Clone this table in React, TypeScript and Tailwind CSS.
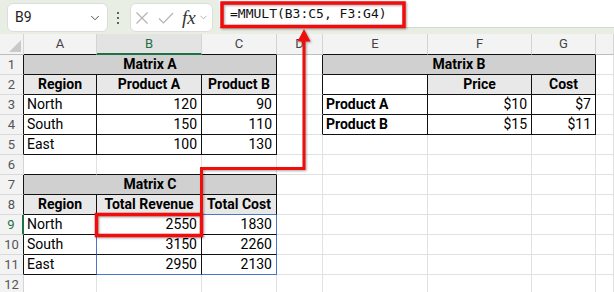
import { ChevronDown } from 'lucide-react';

type Cell = {
  text?: string;
  bold?: boolean;
  align?: 'left' | 'center' | 'right';
  fill?: 'title' | 'head';
  span?: number;
};

const COLS = ['A', 'B', 'C', 'D', 'E', 'F', 'G', ''];
const ROWS = [1, 2, 3, 4, 5, 6, 7, 8, 9, 10, 11, 12];

const title = (text: string): Cell => ({ text, bold: true, align: 'center', fill: 'title', span: 3 });
const head = (text: string): Cell => ({ text, bold: true, align: 'center', fill: 'head' });
const num = (text: string): Cell => ({ text, align: 'right' });
const label = (text: string): Cell => ({ text, align: 'left' });

const sheet: Record<number, Record<number, Cell>> = {
  1: { 1: title('Matrix A'), 5: title('Matrix B') },
  2: { 1: head('Region'), 2: head('Product A'), 3: head('Product B'), 6: head('Price'), 7: head('Cost') },
  3: { 1: label('North'), 2: num('120'), 3: num('90'), 5: { text: 'Product A', bold: true }, 6: num('$10'), 7: num('$7') },
  4: { 1: label('South'), 2: num('150'), 3: num('110'), 5: { text: 'Product B', bold: true }, 6: num('$15'), 7: num('$11') },
  5: { 1: label('East'), 2: num('100'), 3: num('130') },
  7: { 1: title('Matrix C') },
  8: { 1: head('Region'), 2: head('Total Revenue'), 3: head('Total Cost') },
  9: { 1: label('North'), 2: num('2550'), 3: num('1830') },
  10: { 1: label('South'), 2: num('3150'), 3: num('2260') },
  11: { 1: label('East'), 2: num('2950'), 3: num('2130') },
};

// bordered blocks: [top, bottom, left, right]
const tables = [
  [1, 5, 1, 3],
  [1, 4, 5, 7],
  [7, 11, 1, 3],
];

const inTable = (r: number, c: number) =>
  tables.some(([t, b, l, rt]) => r >= t && r <= b && c >= l && c <= rt);

// B9:C11 is the highlighted result range
const inRange = (r: number, c: number) => r >= 9 && r <= 11 && c >= 2 && c <= 3;

function rightBorder(r: number, c: number) {
  if (inRange(r, c) !== inRange(r, c + 1)) return 'border-r-[#4a76c9]';
  if (inTable(r, c) || inTable(r, c + 1)) return 'border-r-[#111]';
  return 'border-r-[#e1e1e1]';
}

function bottomBorder(r: number, c: number) {
  if (inRange(r, c) !== inRange(r + 1, c)) return 'border-b-[#4a76c9]';
  if (inTable(r, c) || inTable(r + 1, c)) return 'border-b-[#111]';
  return 'border-b-[#e1e1e1]';
}

const fills = { title: 'bg-[#d0d0d0]', head: 'bg-[#e8e8e8]' };
const aligns = { left: 'justify-start pl-[3px]', center: 'justify-center', right: 'justify-end pr-[4px]' };
const spans: Record<number, string> = { 1: 'col-span-1', 3: 'col-span-3' };

function GridRow({ r }: { r: number }) {
  const row = sheet[r] ?? {};
  const out = [];
  const selected = r === 9;
  out.push(
    <div
      key="h"
      className={`flex h-[20px] items-center justify-center border-b border-b-[#dadada] bg-[#f3f3f3] text-[13px] ${
        selected ? 'border-r-2 border-r-[#1e7145] bg-[#e3e3e3] text-[#1e7145]' : 'border-r text-[#555]'
      } ${!selected && inTable(r, 1) ? 'border-r-[#111]' : !selected ? 'border-r-[#d4d4d4]' : ''}`}
    >
      {r}
    </div>
  );
  for (let c = 1; c <= 8; c++) {
    const cell = row[c];
    const span = cell?.span ?? 1;
    const last = c + span - 1;
    out.push(
      <div
        key={c}
        className={`flex h-[20px] min-w-0 items-center overflow-hidden whitespace-nowrap border-r border-b text-[14px] text-black ${spans[span]} ${rightBorder(
          r,
          last
        )} ${bottomBorder(r, c)} ${cell?.fill ? fills[cell.fill] : 'bg-white'} ${aligns[cell?.align ?? 'left']} ${
          cell?.bold ? 'font-bold' : ''
        }`}
      >
        {cell?.text}
      </div>
    );
    c = last;
  }
  return <>{out}</>;
}

function NameBox() {
  return (
    <div className="ml-[7px] mt-[3px] flex h-[29px] w-[101px] items-center justify-between rounded-[6px] border border-[#dcdfd9] bg-white pl-[7px] pr-[5px] text-[14px] text-[#222]">
      <span>B9</span>
      <ChevronDown size={14} strokeWidth={1.6} className="text-[#444]" />
    </div>
  );
}

function FormulaTools() {
  return (
    <div className="ml-[11px] mt-[3px] flex h-[29px] w-[83px] items-center rounded-[6px] border border-[#dcdfd9] bg-white pl-[4px]">
      <svg viewBox="0 0 14 14" className="h-[14px] w-[14px]" fill="none" stroke="#b3b3b3" strokeWidth="1.2">
        <path d="M1.5 1.5 12.5 12.5M12.5 1.5 1.5 12.5" />
      </svg>
      <svg viewBox="0 0 16 14" className="ml-[9px] h-[14px] w-[16px]" fill="none" stroke="#b3b3b3" strokeWidth="1.2">
        <path d="M1 7.5 5.5 12 15 2" />
      </svg>
      <span className="ml-[8px] font-['Liberation_Serif',serif] text-[19px] italic leading-none text-[#333]">fx</span>
      <ChevronDown size={11} strokeWidth={1.6} className="ml-[2px] text-[#999]" />
    </div>
  );
}

function Toolbar() {
  return (
    <div className="flex h-[34px] items-start bg-[#e9eee5]">
      <NameBox />
      <div className="ml-[9px] mt-[12px] flex flex-col gap-[3px]">
        <span className="h-[2px] w-[2px] rounded-full bg-[#333]" />
        <span className="h-[2px] w-[2px] rounded-full bg-[#333]" />
        <span className="h-[2px] w-[2px] rounded-full bg-[#333]" />
      </div>
      <FormulaTools />
      <div className="ml-[6px] flex h-[28px] flex-1 items-center border-b border-[#d6d9d3] bg-white pl-[11px] pt-[1px] font-['DejaVu_Sans_Mono',monospace] text-[13px] text-[#111]">
        =MMULT(B3:C5, F3:G4)
      </div>
    </div>
  );
}

function ColumnHeaders() {
  return (
    <>
      <div className="flex h-[21px] items-end justify-end border-r border-b border-r-[#d4d4d4] border-b-[#bdbdbd] bg-[#f3f3f3] pr-[2px] pb-[2px]">
        <svg viewBox="0 0 12 12" className="h-[12px] w-[12px]">
          <polygon points="12,0 12,12 0,12" fill="#c9c9c9" />
        </svg>
      </div>
      {COLS.map((col, i) => {
        const c = i + 1;
        const active = col === 'B';
        return (
          <div
            key={c}
            className={`flex h-[21px] items-center justify-center border-r border-r-[#d4d4d4] text-[13px] ${
              active
                ? 'border-b-2 border-b-[#1e7145] bg-[#e3e3e3] text-[#1e7145]'
                : `border-b bg-[#f3f3f3] text-[#444] ${inTable(1, c) ? 'border-b-[#111]' : 'border-b-[#bdbdbd]'}`
            }`}
          >
            {col}
          </div>
        );
      })}
    </>
  );
}

export default function App() {
  return (
    <div className="relative h-[292px] w-[614px] overflow-hidden bg-white font-['Roboto',sans-serif]">
      <Toolbar />
      <div className="grid grid-cols-[24px_73px_105px_75px_46px_105px_104px_64px_18px]">
        <ColumnHeaders />
        {ROWS.map((r) => (
          <GridRow key={r} r={r} />
        ))}
      </div>

      {/* callout: formula box linked to the result cell */}
      <svg
        className="pointer-events-none absolute top-0 left-0 h-[292px] w-[614px] drop-shadow-[1px_1px_1px_rgba(0,0,0,0.35)]"
        viewBox="0 0 614 292"
        fill="none"
        stroke="#f20d0d"
        strokeWidth="3.5"
      >
        <rect x="222" y="3" width="182" height="23.5" />
        <rect x="96.5" y="214.5" width="105" height="21" />
        <polyline points="201.5,214 201.5,168.5 304,168.5 304,40" strokeLinejoin="miter" strokeWidth="3" />
        <polygon points="304,29 297.5,41.5 310.5,41.5" fill="#f20d0d" stroke="none" />
      </svg>
    </div>
  );
}
